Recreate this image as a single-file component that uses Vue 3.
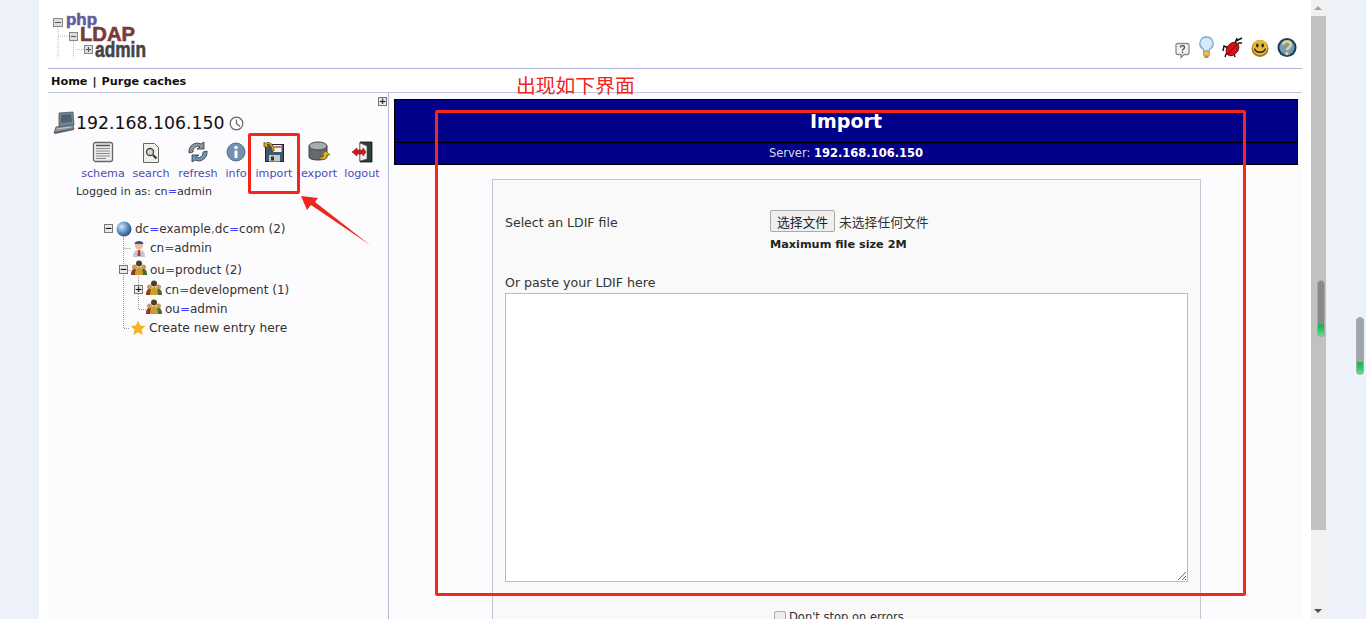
<script setup>
const actions = [
  { id: 'schema', label: 'schema' },
  { id: 'search', label: 'search' },
  { id: 'refresh', label: 'refresh' },
  { id: 'info', label: 'info' },
  { id: 'import', label: 'import' },
  { id: 'export', label: 'export' },
  { id: 'logout', label: 'logout' }
]
</script>

<template>
  <div class="screen">
    <div class="strip"></div>
    <div class="page">
      <header class="head">
        <svg class="logo" width="96" height="48" viewBox="0 0 96 48">
          <g stroke="#bbb" stroke-dasharray="1 1" fill="none">
            <path d="M5 15V47M5 24H16M20.500 29V47M24 37.500H31" />
          </g>
          <g fill="#ddd" stroke="#888">
            <rect x="0.500" y="6.500" width="9" height="8" /><rect x="16.500" y="20.500" width="8" height="8" /><rect x="31.500" y="33.500" width="8" height="8" />
          </g>
          <path d="M2 10.500H8M18 24.500H23M33 37.500H38M35.500 35V40" stroke="#555" />
          <text x="13" y="13" class="lg lg1" textLength="31" lengthAdjust="spacingAndGlyphs">php</text>
          <text x="27" y="29" class="lg lg2" textLength="55" lengthAdjust="spacingAndGlyphs">LDAP</text>
          <text x="42" y="45" class="lg lg3" textLength="51" lengthAdjust="spacingAndGlyphs">admin</text>
        </svg>
        <div class="head-icons">
          <svg class="i-bubble" width="16" height="18" viewBox="0 0 16 18"><path d="M2.500 2.500h10a1.500 1.500 0 0 1 1.500 1.500v8a1.500 1.500 0 0 1-1.500 1.500H9l-3 3v-3H2.500A1.500 1.500 0 0 1 1 12V4a1.500 1.500 0 0 1 1.500-1.500z" fill="#f2f2f2" stroke="#8a8a8a" stroke-width="1.300"/><path d="M5.500 6.500c0-2.500 4-2.500 4 0 0 1.500-2 1.500-2 3M7.500 10.500v1.500" fill="none" stroke="#444" stroke-width="1.300"/></svg>
          <svg width="15" height="22" viewBox="0 0 15 22"><path d="M7.500 1a6.500 6.500 0 0 0-3.500 12c.7.600 1 1.500 1 2.500h5c0-1 .3-1.900 1-2.500A6.500 6.500 0 0 0 7.500 1z" fill="#d6ebfa" stroke="#7fa8d0" stroke-width="1.300"/><rect x="4.500" y="15" width="6" height="5" rx="1" fill="#e0c050" stroke="#a08830" stroke-width=".7"/><path d="M5.500 21h4" stroke="#8a7a40" stroke-width="1.500"/></svg>
          <svg class="i-bug" width="21" height="22" viewBox="0 0 21 22"><path d="M14 4l6-3M16 6l4 0M13 6l2-5M7 11L2 9 1 14M8 15l-4 2-1 3M12 17l1 3" stroke="#111" stroke-width="1.400" fill="none"/><ellipse cx="10.500" cy="12" rx="5.500" ry="7.500" transform="rotate(40 10.500 12)" fill="#d8101c" stroke="#500" stroke-width=".8"/><path d="M6 17L15 7" stroke="#600" stroke-width="1"/></svg>
          <svg width="18" height="19" viewBox="0 0 18 19"><circle cx="9" cy="9.500" r="8.500" fill="#a07c20"/><circle cx="9" cy="8.500" r="7.500" fill="#e4b73a"/><ellipse cx="6.300" cy="6.500" rx="1.200" ry="2" fill="#222"/><ellipse cx="11.700" cy="6.500" rx="1.200" ry="2" fill="#222"/><path d="M3.500 9.500c1.500 5 9.500 5 11 0" fill="none" stroke="#222" stroke-width="1.300"/></svg>
          <svg width="20" height="21" viewBox="0 0 21 21"><circle cx="10.500" cy="10.500" r="10" fill="#1c3e58"/><circle cx="10.500" cy="10.500" r="7.800" fill="#6f9cb8"/><path d="M6.500 7.500c0-4.500 8-4.500 8 0 0 3-4 3-4 6" fill="none" stroke="#f0d080" stroke-width="2.600"/><circle cx="10.500" cy="17" r="1.700" fill="#f0d080"/></svg>
        </div>
      </header>

      <nav class="menu"><b>Home</b><span class="pipe">|</span><b>Purge caches</b></nav>

      <div class="body">
        <aside class="side">
          <span class="plus-box side-toggle">+</span>
          <div class="server">
            <svg width="22" height="24" viewBox="0 0 22 24">
              <path d="M6 2l14-1 1 13-15 2z" fill="#76858f" stroke="#4a545a" stroke-width=".8"/>
              <path d="M8 4l10-1 1 8-11 1z" fill="#4c6474"/>
              <path d="M3 16l17-2 1 4-20 4z" fill="#8a949a" stroke="#4a545a" stroke-width=".8"/>
              <path d="M1 21l20-4v2L2 23z" fill="#5c666c"/>
              <path d="M4 18l14-2" stroke="#c4cace"/>
            </svg>
            <span class="ip">192.168.106.150</span>
            <svg width="15" height="15" viewBox="0 0 15 15"><circle cx="7.500" cy="7.500" r="6.300" fill="#fff" stroke="#666" stroke-width="1.200"/><path d="M7.500 3.500v4l3.500 3" fill="none" stroke="#666" stroke-width="1.200"/></svg>
          </div>

          <div class="actions">
            <a v-for="a in actions" :key="a.id" class="action" :class="'a-' + a.id">
              <svg width="24" height="24" viewBox="0 0 24 24">
                <template v-if="a.id === 'schema'">
                  <rect x="2.500" y="2.500" width="19" height="19" rx="2" fill="#ececec" stroke="#666" stroke-width="1.300"/>
                  <path d="M5 5.500h14" stroke="#555" stroke-width="1.500"/>
                  <path d="M5 8.500h14M5 11h14M5 13.500h14M5 16h14M5 18.500h10" stroke="#888"/>
                </template>
                <template v-else-if="a.id === 'search'">
                  <path d="M4.500 3.500h11l4 4v15h-15z" fill="#f0f0ea" stroke="#666"/>
                  <circle cx="11" cy="12" r="3.500" fill="#d0d8da" stroke="#444" stroke-width="1.300"/>
                  <path d="M14 15l3.500 3.500" stroke="#333" stroke-width="2.200"/>
                </template>
                <template v-else-if="a.id === 'refresh'">
                  <path d="M3 13C2 6 9 1 15 4l3-2v7h-7l3-2c-4-2-7 1-7 5z" fill="#8c98a2" stroke="#333" stroke-width=".8"/>
                  <path d="M21 11c1 7-6 12-12 9l-3 2v-7h7l-3 2c4 2 7-1 7-5z" fill="#6c94bc" stroke="#333" stroke-width=".8"/>
                </template>
                <template v-else-if="a.id === 'info'">
                  <circle cx="12" cy="12" r="9" fill="#7290b4" stroke="#5a6e88"/>
                  <circle cx="12" cy="7.500" r="1.800" fill="#fff"/>
                  <rect x="10.500" y="10.500" width="3" height="7.500" fill="#fff"/>
                </template>
                <template v-else-if="a.id === 'import'">
                  <rect x="3.500" y="4.500" width="18" height="17" fill="#405a6c" stroke="#1c2830"/>
                  <rect x="11" y="5" width="8.500" height="7" fill="#f4f4f4"/>
                  <path d="M12 7h7" stroke="#d04040" stroke-width="1.500"/>
                  <rect x="7" y="15" width="11" height="6.500" fill="#c8c8c8"/>
                  <rect x="9" y="16.500" width="3" height="4" fill="#333"/>
                  <path d="M10 11C10 5 6 3 5 5L7 7H2V2l1.500 1.500C6 1 12 3 12 11z" fill="#e0b030" stroke="#5a4410" stroke-width=".8"/>
                </template>
                <template v-else-if="a.id === 'export'">
                  <path d="M2 6v11c0 4 18 4 18 0V6z" fill="#666a6e" stroke="#444"/>
                  <ellipse cx="11" cy="6" rx="9" ry="4" fill="#a8acae" stroke="#444"/>
                  <path d="M12 18c4 3 8 1 8-3h3l-4-4-5 4h3c0 2-3 2-5 3z" fill="#e3b32f" stroke="#6a5010" stroke-width=".7"/>
                </template>
                <template v-else>
                  <path d="M10 2h12v20H10z" fill="#2e3e38" stroke="#111" stroke-width=".8"/>
                  <path d="M10 3l7 3v13l-7 2z" fill="#f0f0f0" stroke="#444" stroke-width=".5"/>
                  <path d="M2 12l5-4v2h6V8l3 4-3 4v-2H7v2z" fill="#d4181c" stroke="#700" stroke-width=".5"/>
                </template>
              </svg>
              <span>{{ a.label }}</span>
            </a>
          </div>
          <p class="logged">Logged in as: cn<i>=</i>admin</p>

          <div class="tree">
            <svg class="tree-lines" width="60" height="120" viewBox="0 0 60 120">
              <path d="M20.500 14V109.500H27M20.500 29.500H28M20.500 51.500H28M35.500 55V90.500H43" fill="none" stroke="#999" stroke-dasharray="1 1"/>
            </svg>
            <div class="row r0">
              <span class="plus-box tree-box">−</span>
              <svg width="16" height="16" viewBox="0 0 16 16"><defs><radialGradient id="gl" cx=".35" cy=".35" r=".8"><stop offset="0" stop-color="#d9e8f6"/><stop offset=".5" stop-color="#5b8ec2"/><stop offset="1" stop-color="#123a68"/></radialGradient></defs><circle cx="8" cy="8" r="7.500" fill="url(#gl)"/></svg>
              <span>dc<i>=</i>example<em>,</em>dc<i>=</i>com (2)</span>
            </div>
            <div class="row r1">
              <svg width="16" height="18" viewBox="0 0 16 18"><path d="M2 18c0-6 3-7 6-7s6 1 6 7z" fill="#c4c8d6"/><path d="M7 11h2l.5 6h-3z" fill="#c03030"/><circle cx="8" cy="6.500" r="4" fill="#eebd9a"/><path d="M3.500 5c0-4 9-4 9 0z" fill="#3c4c90"/></svg>
              <span>cn<i>=</i>admin</span>
            </div>
            <div class="row r2">
              <span class="plus-box tree-box">−</span>
              <svg class="ou" width="16" height="16" viewBox="0 0 16 16"><circle cx="8" cy="3.500" r="3" fill="#5a3c1c"/><circle cx="3.500" cy="7" r="2.500" fill="#c89a60"/><circle cx="12.500" cy="7" r="2.500" fill="#c89a60"/><path d="M0 15c0-5 2-6 3.500-6S7 10 7 15z" fill="#a03020"/><path d="M9 15c0-5 2-6 3.500-6S16 10 16 15z" fill="#486c28"/><path d="M4 15c0-6 2-8 4-8s4 2 4 8z" fill="#c8a030"/></svg>
              <span>ou<i>=</i>product (2)</span>
            </div>
            <div class="row r3">
              <span class="plus-box tree-box">+</span>
              <svg class="ou" width="16" height="16" viewBox="0 0 16 16"><circle cx="8" cy="3.500" r="3" fill="#5a3c1c"/><circle cx="3.500" cy="7" r="2.500" fill="#c89a60"/><circle cx="12.500" cy="7" r="2.500" fill="#c89a60"/><path d="M0 15c0-5 2-6 3.500-6S7 10 7 15z" fill="#a03020"/><path d="M9 15c0-5 2-6 3.500-6S16 10 16 15z" fill="#486c28"/><path d="M4 15c0-6 2-8 4-8s4 2 4 8z" fill="#c8a030"/></svg>
              <span>cn<i>=</i>development (1)</span>
            </div>
            <div class="row r4">
              <svg class="ou" width="16" height="16" viewBox="0 0 16 16"><circle cx="8" cy="3.500" r="3" fill="#5a3c1c"/><circle cx="3.500" cy="7" r="2.500" fill="#c89a60"/><circle cx="12.500" cy="7" r="2.500" fill="#c89a60"/><path d="M0 15c0-5 2-6 3.500-6S7 10 7 15z" fill="#a03020"/><path d="M9 15c0-5 2-6 3.500-6S16 10 16 15z" fill="#486c28"/><path d="M4 15c0-6 2-8 4-8s4 2 4 8z" fill="#c8a030"/></svg>
              <span>ou<i>=</i>admin</span>
            </div>
            <div class="row r5">
              <svg width="16" height="16" viewBox="0 0 16 16"><path d="M8 .5l2.300 5 5.200.6-3.900 3.500 1.100 5.400L8 12.300 3.300 15l1.100-5.400L.5 6.100l5.200-.6z" fill="#f6b520"/></svg>
              <span class="create">Create new entry here</span>
            </div>
          </div>
        </aside>

        <main class="main">
          <div class="title-box">
            <h1>Import</h1>
            <div class="sub">Server: <b>192.168.106.150</b></div>
          </div>
          <form class="form">
            <div class="file-row">
              <label>Select an LDIF file</label>
              <div class="file-col">
                <div class="file-pick"><span class="btn">选择文件</span><span class="none">未选择任何文件</span></div>
                <b class="max">Maximum file size 2M</b>
              </div>
            </div>
            <label class="paste">Or paste your LDIF here</label>
            <div class="area">
              <svg class="grip" width="10" height="10" viewBox="0 0 10 10"><path d="M1 9l8-8M5 9l4-4M8 9l1-1" stroke="#666"/></svg>
            </div>
            <div class="check"><span class="cb"></span><span>Don't stop on errors</span></div>
          </form>
        </main>
      </div>
    </div>

    <div class="scroll">
      <span class="arrow up"></span>
      <div class="thumb"></div>
      <span class="arrow down"></span>
    </div>
    <div class="rest"></div>

    <span class="pill pill-a"><i></i></span>
    <span class="pill pill-b"><i></i></span>

    <div class="note">出现如下界面</div>
    <div class="mark mark-small"></div>
    <div class="mark mark-big"></div>
    <svg class="red-arrow" width="72" height="52" viewBox="0 0 72 52"><path d="M1 1L18 3 15 7 70 50 11 10 7 15z" fill="#f2251c"/></svg>
  </div>
</template>

<style>
html, body { margin: 0; background: #edf2fa; }
</style>

<style scoped>
.screen {
  position: relative;
  display: flex;
  width: 1366px;
  height: 619px;
  overflow: hidden;
  background: #edf2fa;
  font-family: "DejaVu Sans", Verdana, "Noto Sans CJK SC", sans-serif;
  font-size: 11.200px;
  color: #333;
}
.strip { width: 39px; flex: none; }
.page { width: 1272px; flex: none; background: #fff; display: flex; flex-direction: column; }
.head {
  height: 69px;
  box-sizing: border-box;
  margin: 0 9px;
  border-bottom: 1px solid #b4b4d8;
  display: flex;
  justify-content: space-between;
  align-items: flex-end;
  padding: 0 5px 10px 5px;
}
.logo { margin-bottom: -2px; }
.lg { font-family: "Liberation Sans", sans-serif; font-weight: 700; stroke-width: 0.6px; }
.lg1 { font-size: 16px; fill: #5f5fa0; stroke: #5f5fa0; }
.lg2 { font-size: 20px; fill: #7a3a3a; stroke: #7a3a3a; }
.lg3 { font-size: 22px; fill: #444; stroke: #444; }
.head-icons { display: flex; align-items: flex-end; gap: 8px; }
.i-bubble, .i-bug { margin-bottom: -1px; }
.menu {
  height: 24px;
  box-sizing: border-box;
  margin: 0 9px;
  border-bottom: 1px solid #c4c4dc;
  padding: 5px 0 0 3px;
  line-height: 16px;
  color: #111;
  font-size: 11.250px;
  display: flex;
  gap: 5px;
}
.pipe { font-weight: 700; }
.body { flex: 1; display: flex; min-height: 0; margin: 0 9px; }
.side {
  position: relative;
  padding-left: 3px;
  flex: none;
  width: 337px;
  background: #fcfcff;
  border-right: 1px solid #b8b8d8;
}
.plus-box {
  display: inline-flex;
  align-items: center;
  justify-content: center;
  box-sizing: border-box;
  width: 9px;
  height: 9px;
  border: 1px solid #777;
  background: #e8e8e8;
  color: #111;
  font-size: 9px;
  line-height: 1;
  font-weight: 700;
  flex: none;
}
.side-toggle { position: absolute; right: 1px; top: 4px; }
.server { display: flex; align-items: center; padding: 18px 0 0 2px; height: 24px; }
.ip { font-size: 17.300px; color: #111; margin: 0 5px 0 1px; }
.actions { position: relative; height: 44px; margin-top: 5px; }
.action { position: absolute; top: 0; display: flex; flex-direction: column; align-items: center; width: 60px; color: #4c4cb4; line-height: 14px; }
.action span { margin-top: 3px; }
.a-schema { left: 22px; }
.a-search { left: 70px; }
.a-refresh { left: 117px; }
.a-info { left: 155px; }
.a-import { left: 193px; }
.a-export { left: 238px; }
.a-logout { left: 281px; }
.logged { margin: 1px 0 0 25px; line-height: 14px; color: #333; }
i { font-style: normal; color: #4040ff; }
em { font-style: normal; color: #f04040; }
.tree { position: relative; margin-top: 20px; padding-left: 52px; }
.tree-lines { position: absolute; left: 52px; top: 0; }
.row { position: relative; display: flex; align-items: center; gap: 3px; height: 19px; white-space: nowrap; color: #333; font-size: 12px; }
.create { font-size: 12.300px; }
.r0 { padding-left: 1px; }
.r1 { padding-left: 28px; }
.r2 { margin-top: 3px; padding-left: 16px; }
.r3 { margin-top: 1px; padding-left: 31px; }
.r4 { padding-left: 43px; }
.r5 { padding-left: 27px; }
.ou { margin-top: -4px; }
.main { flex: 1; background: #fcfcff; padding: 6px 4px 0 5px; min-width: 0; overflow: hidden; }
.title-box {
  background: #000088;
  border: 1px solid #000;
  color: #fff;
  text-align: center;
  height: 64px;
}
h1 { margin: -1px 0 0; height: 44px; border-bottom: 1px solid #000; box-sizing: border-box; font-size: 19px; line-height: 45px; font-weight: 700; }
.sub { line-height: 20px; color: #ddd; font-size: 11.500px; }
.sub b { color: #fff; }
.form {
  margin: 14px 97px 0 98px;
  border: 1px solid #c4c4d4;
  background: #f9f9f9;
  padding: 30px 12px 0;
  height: 460px;
  color: #333;
}
.file-row { display: flex; }
.file-row label { width: 265px; line-height: 26px; font-size: 12.500px; }
.file-pick { display: flex; align-items: center; gap: 4px; }
.btn {
  box-sizing: border-box;
  width: 65px;
  height: 22px;
  display: flex;
  align-items: center;
  justify-content: center;
  background: #efefef;
  border: 1px solid #aaa;
  border-radius: 2px;
  font: 12.800px "Noto Sans CJK SC", sans-serif;
  color: #222;
}
.none { font: 12.800px "Noto Sans CJK SC", sans-serif; color: #333; }
.max { display: block; margin-top: 6px; line-height: 14px; color: #222; font-size: 11.250px; }
.paste { display: block; margin-top: 24px; line-height: 14px; font-size: 12.600px; }
.area {
  position: relative;
  box-sizing: border-box;
  margin-top: 3px;
  height: 289px;
  width: 683px;
  background: #fff;
  border: 1px solid #bbb;
}
.grip { position: absolute; right: 0; bottom: 0; }
.check { display: flex; align-items: center; gap: 3px; margin: 28px 0 0 269px; line-height: 14px; color: #333; font-size: 11.500px; }
.cb { width: 10px; height: 10px; border: 1px solid #aaa; border-radius: 2px; background: #eee; }
.scroll { position: relative; width: 15px; flex: none; background: #f1f1f1; }
.thumb { position: absolute; left: 0; right: 0; top: 16px; height: 514px; background: #c1c1c1; }
.arrow { position: absolute; left: 3px; width: 0; height: 0; border-left: 4px solid transparent; border-right: 4px solid transparent; }
.up { top: 6px; border-bottom: 4px solid #a3a3a3; }
.down { bottom: 6px; border-top: 4px solid #505050; }
.rest { flex: 1; }
.pill { position: absolute; width: 8px; border-radius: 4px; overflow: hidden; background: #8a8a8a; border: 1px solid #a8a8a8; box-sizing: border-box; }
.pill i { position: absolute; left: 0; right: 0; bottom: 0; height: 12px; background: linear-gradient(#1cb857 25%, #5fe48b); }
.pill-a { left: 1317px; top: 280px; height: 57px; }
.pill-b { left: 1356px; top: 317px; height: 58px; background: #a0a4ac; }
.note { position: absolute; left: 516px; top: 73px; color: #f0261e; font: 19.800px/24px "Noto Sans CJK SC", sans-serif; }
.mark { position: absolute; box-sizing: border-box; border: 3px solid #f4261d; border-radius: 2px; }
.mark-small { left: 248px; top: 133px; width: 52px; height: 61px; }
.mark-big { left: 435px; top: 110px; width: 811px; height: 486px; }
.red-arrow { position: absolute; left: 300px; top: 195px; }
</style>
